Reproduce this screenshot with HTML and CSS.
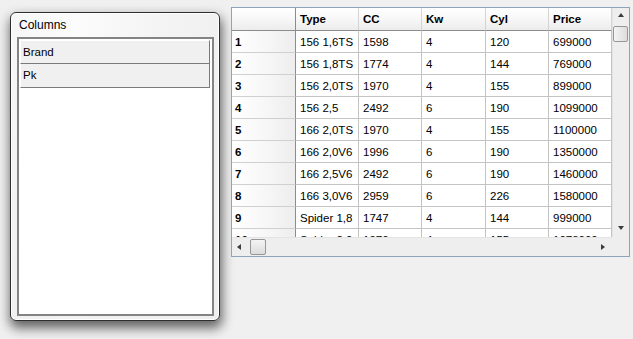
FILE: index.html
```html
<!DOCTYPE html>
<html>
<head>
    <meta charset="UTF-8">
    <title>Columns</title>
    <link rel="stylesheet" href="styles.css">
</head>
<body>
    <div class="desk">
        <div class="panel">
            <div class="panel-title">Columns</div>
            <div class="list">
                <div class="list-item">Brand</div>
                <div class="list-item">Pk</div>
            </div>
        </div>

        <div class="grid">
            <div class="view">
                <table class="data">
                    <colgroup>
                        <col class="c64">
                        <col class="c63">
                        <col class="c63">
                        <col class="c64">
                        <col class="c63">
                        <col class="c63">
                    </colgroup>
                    <thead>
                        <tr>
                            <th class="corner-cell"></th>
                            <th>Type</th>
                            <th>CC</th>
                            <th>Kw</th>
                            <th>Cyl</th>
                            <th>Price</th>
                        </tr>
                    </thead>
                    <tbody>
                        <tr><th>1</th><td>156 1,6TS</td><td>1598</td><td>4</td><td>120</td><td>699000</td></tr>
                        <tr><th>2</th><td>156 1,8TS</td><td>1774</td><td>4</td><td>144</td><td>769000</td></tr>
                        <tr><th>3</th><td>156 2,0TS</td><td>1970</td><td>4</td><td>155</td><td>899000</td></tr>
                        <tr><th>4</th><td>156 2,5</td><td>2492</td><td>6</td><td>190</td><td>1099000</td></tr>
                        <tr><th>5</th><td>166 2,0TS</td><td>1970</td><td>4</td><td>155</td><td>1100000</td></tr>
                        <tr><th>6</th><td>166 2,0V6</td><td>1996</td><td>6</td><td>190</td><td>1350000</td></tr>
                        <tr><th>7</th><td>166 2,5V6</td><td>2492</td><td>6</td><td>190</td><td>1460000</td></tr>
                        <tr><th>8</th><td>166 3,0V6</td><td>2959</td><td>6</td><td>226</td><td>1580000</td></tr>
                        <tr><th>9</th><td>Spider 1,8</td><td>1747</td><td>4</td><td>144</td><td>999000</td></tr>
                        <tr><th>10</th><td>Spider 2,0</td><td>1970</td><td>4</td><td>155</td><td>1073000</td></tr>
                    </tbody>
                </table>
            </div>

            <div class="vscroll">
                <div class="arrow arrow-up"></div>
                <div class="vthumb"></div>
                <div class="track"></div>
                <div class="arrow arrow-down"></div>
            </div>

            <div class="hscroll">
                <div class="arrow arrow-left"></div>
                <div class="hthumb"></div>
                <div class="track"></div>
                <div class="arrow arrow-right"></div>
            </div>

            <div class="scroll-corner"></div>
        </div>
    </div>
</body>
</html>
```

FILE: styles.css
```css
body {
    margin: 0;
    background: #f0f0f0;
    font-family: "Liberation Sans", Arial, sans-serif;
    font-size: 11.5px;
    color: #000;
}

.desk {
    display: flex;
    align-items: flex-start;
    padding-left: 10px;
    gap: 11px;
    height: 339px;
}

/* floating "Columns" panel */

.panel {
    margin-top: 12px;
    width: 210px;
    height: 309px;
    box-sizing: border-box;
    border: 1px solid #2e2e2e;
    border-radius: 6px;
    background: radial-gradient(ellipse at 30% 5%, #fcfcfc 0%, #f3f3f3 45%, #efefef 100%);
    box-shadow: 1px 6px 12px 1px rgba(0, 0, 0, 0.6), inset 0 0 0 1px #ffffff;
    padding: 0 5px 4px 6px;
    display: flex;
    flex-direction: column;
}

.panel-title {
    height: 24px;
    line-height: 24px;
    padding-left: 2px;
    font-size: 12px;
}

.list {
    flex: 1;
    background: #fff;
    border: 2px solid #848484;
    padding: 1px 2px 0 1px;
}

.list-item {
    height: 22px;
    line-height: 22px;
    padding-left: 2px;
    background: #f0f0f0;
    border-right: 1px solid #7a7a7a;
    border-bottom: 1px solid #7a7a7a;
    border-top: 1px solid #fff;
    border-left: 1px solid #fff;
}

.list-item + .list-item {
    border-top: none;
    height: 23px;
}

/* table widget */

.grid {
    margin-top: 7px;
    width: 399px;
    height: 250px;
    box-sizing: border-box;
    border: 1px solid #8ea4bd;
    background: #fff;
    display: grid;
    grid-template-columns: 380px 17px;
    grid-template-rows: 229px 19px;
}

.view {
    overflow: hidden;
}

.data {
    border-collapse: separate;
    border-spacing: 0;
    table-layout: fixed;
    width: 380px;
}

.c64 { width: 64px; }
.c63 { width: 63px; }

.data tr {
    height: 22px;
}

.data th,
.data td {
    padding: 0 0 0 4px;
    border-right: 1px solid #c4c4c4;
    border-bottom: 1px solid #c4c4c4;
    text-align: left;
    white-space: nowrap;
    overflow: hidden;
}

.data thead th {
    height: 22px;
    background: linear-gradient(#ffffff 0%, #f7f7f7 50%, #ececec 100%);
    border-bottom: 1px solid #8c8c8c;
    border-right: 1px solid #d4d4d4;
    font-weight: bold;
}

.data tbody th {
    background: linear-gradient(90deg, #ffffff 0%, #f6f6f6 60%, #ededed 100%);
    border-right: 1px solid #8c8c8c;
    border-bottom: 1px solid #d0d0d0;
    font-weight: bold;
    padding-left: 3px;
}

.data thead .corner-cell {
    border-right: 1px solid #8c8c8c;
}

/* scrollbars */

.vscroll,
.hscroll,
.scroll-corner {
    background: #eeeeee;
}

.vscroll {
    display: flex;
    flex-direction: column;
    border-left: 1px solid #e4e4e4;
}

.hscroll {
    display: flex;
    align-items: center;
    border-top: 1px solid #e4e4e4;
}

.track {
    flex: 1;
}

.arrow {
    width: 16px;
    height: 16px;
    position: relative;
}

.arrow::after {
    content: "";
    position: absolute;
    width: 0;
    height: 0;
    border: 3px solid transparent;
}

.arrow-up::after {
    left: 5px;
    top: 5px;
    border-bottom: 4px solid #3c3c3c;
    border-top: none;
}

.arrow-down::after {
    left: 5px;
    top: 7px;
    border-top: 4px solid #3c3c3c;
    border-bottom: none;
}

.arrow-left::after {
    left: 5px;
    top: 5px;
    border-right: 4px solid #3c3c3c;
    border-left: none;
}

.arrow-right::after {
    left: 7px;
    top: 5px;
    border-left: 4px solid #3c3c3c;
    border-right: none;
}

.arrow-down {
    margin-bottom: 2px;
}

.vthumb {
    margin: 2px 1px 0 0;
    height: 14px;
    border: 1px solid #979797;
    border-radius: 2px;
    background: linear-gradient(90deg, #f4f4f4, #dcdcdc);
}

.hthumb {
    margin-left: 2px;
    width: 14px;
    height: 14px;
    border: 1px solid #979797;
    border-radius: 2px;
    background: linear-gradient(#f4f4f4, #dcdcdc);
}

.arrow-right {
    margin-right: 2px;
}
```
